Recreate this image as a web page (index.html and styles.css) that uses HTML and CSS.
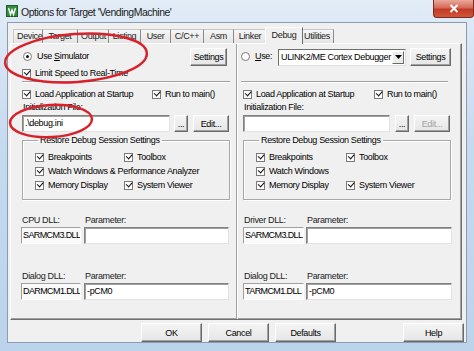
FILE: index.html
```html
<!DOCTYPE html>
<html lang="en">
<head>
  <meta charset="UTF-8" />
  <title>Options for Target 'VendingMachine'</title>
  <link rel="stylesheet" href="styles.css">
</head>
<body>
  <div class="window">
    <div class="titlebar">
      <span class="app-icon">
        <svg width="12" height="12" viewBox="0 0 12 12">
          <rect x="0" y="0" width="12" height="12" fill="#2f8f3c"/>
          <rect x="0.5" y="0.5" width="11" height="11" fill="none" stroke="#1c5e25"/>
          <path d="M2.5 3 L4.5 9.5 L6 5 L7.5 9.5 L9.5 3" fill="none" stroke="#fff" stroke-width="1.4"/>
        </svg>
      </span>
      <span class="title">Options for Target 'VendingMachine'</span>
      <span class="close-btn">
        <svg width="10" height="9" viewBox="0 0 10 9">
          <path d="M1.5 1 L8.5 8 M8.5 1 L1.5 8" stroke="#fff" stroke-width="2"/>
        </svg>
      </span>
    </div>

    <div class="client">
      <div class="tabs">
        <span class="tab first">Device</span>
        <span class="tab">Target</span>
        <span class="tab">Output</span>
        <span class="tab">Listing</span>
        <span class="tab">User</span>
        <span class="tab">C/C++</span>
        <span class="tab">Asm</span>
        <span class="tab">Linker</span>
        <span class="tab active">Debug</span>
        <span class="tab">Utilities</span>
      </div>

      <div class="panel">
        <!-- simulator side -->
        <div class="col col-left">
          <div class="row row-use">
            <label class="radio on"><span class="circle"></span><span>Use <u>S</u>imulator</span></label>
            <button class="btn btn-settings">Settings</button>
          </div>
          <div class="row row-limit">
            <label class="check on"><span class="box"></span>Limit Speed to Real-Time</label>
          </div>
          <div class="sep"></div>
          <div class="row row-load">
            <label class="check on load-app"><span class="box"></span>Load Application at Startup</label>
            <label class="check on"><span class="box"></span>Run to main()</label>
          </div>
          <div class="label-row">Initialization File:</div>
          <div class="row row-file">
            <div class="field file-field">.\debug.ini</div>
            <button class="btn btn-dots">...</button>
            <button class="btn btn-edit">Edit...</button>
          </div>
          <fieldset class="group">
            <legend>Restore Debug Session Settings</legend>
            <div class="group-row">
              <label class="check on g1"><span class="box"></span>Breakpoints</label>
              <label class="check on"><span class="box"></span>Toolbox</label>
            </div>
            <div class="group-row">
              <label class="check on"><span class="box"></span>Watch Windows &amp; Performance Analyzer</label>
            </div>
            <div class="group-row">
              <label class="check on g1"><span class="box"></span>Memory Display</label>
              <label class="check on"><span class="box"></span>System Viewer</label>
            </div>
          </fieldset>
          <div class="dll dll-first">
            <span class="dll-label">CPU DLL:</span>
            <span class="dll-label">Parameter:</span>
            <div class="field dll-name">SARMCM3.DLL</div>
            <div class="field param"></div>
          </div>
          <div class="dll dll-second">
            <span class="dll-label">Dialog DLL:</span>
            <span class="dll-label">Parameter:</span>
            <div class="field dll-name">DARMCM1.DLL</div>
            <div class="field param">-pCM0</div>
          </div>
        </div>

        <!-- target side -->
        <div class="col col-right">
          <div class="row row-use">
            <label class="radio"><span class="circle"></span><span><u>U</u>se:</span></label>
            <div class="select">
              <span class="select-text">ULINK2/ME Cortex Debugger</span>
              <span class="select-arrow">
                <svg width="7" height="4" viewBox="0 0 7 4"><path d="M0 0 H7 L3.5 4 Z" fill="#000"/></svg>
              </span>
            </div>
            <button class="btn btn-settings">Settings</button>
          </div>
          <div class="row row-limit"></div>
          <div class="sep"></div>
          <div class="row row-load">
            <label class="check on load-app-r"><span class="box"></span>Load Application at Startup</label>
            <label class="check on"><span class="box"></span>Run to main()</label>
          </div>
          <div class="label-row">Initialization File:</div>
          <div class="row row-file">
            <div class="field file-field"></div>
            <button class="btn btn-dots">...</button>
            <button class="btn btn-edit disabled">Edit...</button>
          </div>
          <fieldset class="group">
            <legend>Restore Debug Session Settings</legend>
            <div class="group-row">
              <label class="check on g1r"><span class="box"></span>Breakpoints</label>
              <label class="check on"><span class="box"></span>Toolbox</label>
            </div>
            <div class="group-row">
              <label class="check on"><span class="box"></span>Watch Windows</label>
            </div>
            <div class="group-row">
              <label class="check on g1r"><span class="box"></span>Memory Display</label>
              <label class="check on"><span class="box"></span>System Viewer</label>
            </div>
          </fieldset>
          <div class="dll dll-first">
            <span class="dll-label">Driver DLL:</span>
            <span class="dll-label">Parameter:</span>
            <div class="field dll-name">SARMCM3.DLL</div>
            <div class="field param"></div>
          </div>
          <div class="dll dll-second">
            <span class="dll-label">Dialog DLL:</span>
            <span class="dll-label">Parameter:</span>
            <div class="field dll-name">TARMCM1.DLL</div>
            <div class="field param">-pCM0</div>
          </div>
        </div>
      </div>

      <div class="buttons">
        <button class="btn btn-main">OK</button>
        <button class="btn btn-main">Cancel</button>
        <button class="btn btn-main">Defaults</button>
        <button class="btn btn-main btn-help">Help</button>
      </div>
    </div>

    <!-- red marker annotations drawn over the dialog -->
    <svg class="marks" width="474" height="351" viewBox="0 0 474 351">
      <ellipse cx="76" cy="58" rx="71" ry="24" transform="rotate(-4 76 58)" fill="none" stroke="#d8222b" stroke-width="2.5"/>
      <ellipse cx="51" cy="121" rx="41" ry="16" transform="rotate(-3 51 121)" fill="none" stroke="#d8222b" stroke-width="2.5"/>
    </svg>
  </div>
</body>
</html>
```

FILE: styles.css
```css
* {
  box-sizing: border-box;
}
body {
  margin: 0;
  background: #fff;
  font-family: "Liberation Sans", Arial, sans-serif;
  font-size: 9px;
  letter-spacing: -0.35px;
  color: #000;
}
.window {
  position: relative;
  width: 474px;
  height: 351px;
  background: linear-gradient(#e2ecf7, #c6daef 40%, #bcd3ec);
  padding: 0 7px 8px 7px;
  overflow: hidden;
}
.titlebar {
  height: 22px;
  display: flex;
  align-items: center;
  margin-left: -1px;
}
.app-icon {
  width: 12px;
  height: 12px;
  display: flex;
}
.title {
  margin-left: 3px;
  margin-top: 1px;
  font-size: 10.5px;
  letter-spacing: -0.5px;
  color: #1b1b1b;
}
.close-btn {
  margin-left: auto;
  margin-right: -7px;
  align-self: flex-start;
  width: 41px;
  height: 18px;
  display: flex;
  align-items: center;
  justify-content: center;
  background: linear-gradient(#e9a99c, #d56a58 45%, #c23b25 55%, #d0563c);
  border: 1px solid #7a2a20;
  border-top: none;
  border-radius: 0 0 4px 4px;
}
.client {
  height: 321px;
  background: #f0f0f0;
  border: 1px solid #8c9cb0;
  padding: 5px 4px 0 2px;
  display: flex;
  flex-direction: column;
}
.tabs {
  height: 15px;
  display: flex;
  padding-left: 3px;
  align-items: flex-end;
}
.tab {
  height: 14px;
  padding: 0 3px;
  line-height: 13px;
  text-align: center;
  border-top: 1px solid #c8c8c8;
  border-right: 1px solid #8a8a8a;
  background: linear-gradient(#f6f6f6, #e4e4e4);
  color: #1c1c1c;
}
.tab:nth-child(1) { width: 30px; }
.tab:nth-child(2) { width: 35px; }
.tab:nth-child(3) { width: 31px; }
.tab:nth-child(4) { width: 32px; }
.tab:nth-child(5) { width: 30px; }
.tab:nth-child(6) { width: 33px; }
.tab:nth-child(7) { width: 30px; }
.tab:nth-child(8) { width: 33px; }
.tab:nth-child(10) { width: 33px; }
.tab.first {
  border-left: 1px solid #c8c8c8;
}
.tab.active {
  width: 38px;
  height: 17px;
  margin-bottom: -1px;
  margin-left: -2px;
  margin-right: -2px;
  line-height: 14px;
  background: #f0f0f0;
  border-top: 1px solid #fff;
  border-left: 1px solid #fff;
  border-right: 1px solid #6f6f6f;
  position: relative;
  z-index: 1;
}
.panel {
  height: 277px;
  border: 1px solid;
  border-color: #fff #6f6f6f #6f6f6f #fff;
  box-shadow: inset -1px -1px 0 #a0a0a0;
  display: grid;
  grid-template-columns: 226px 1fr;
}
.col {
  display: flex;
  flex-direction: column;
}
.col-left {
  padding: 0 6px 0 11px;
  border-right: 1px solid #a0a0a0;
}
.col-right {
  padding: 0 12px 0 5px;
  border-left: 1px solid #fff;
}
.row {
  display: flex;
  align-items: center;
}
.row-use {
  margin-top: 3px;
  height: 18px;
}
.row-limit {
  height: 14px;
  margin-top: 1px;
}
.sep {
  margin-top: 1px;
  height: 2px;
  border-top: 1px solid #a0a0a0;
  border-bottom: 1px solid #fff;
}
.col-right .sep {
  margin-left: -2px;
  margin-right: 4px;
}
.row-load {
  margin-top: 4px;
  height: 14px;
}
.label-row {
  height: 12px;
  line-height: 12px;
  margin-top: 0;
  padding-left: 1px;
}
.row-file {
  margin-top: 2px;
  height: 17px;
}
.check, .radio {
  display: flex;
  align-items: center;
  white-space: nowrap;
}
.box {
  width: 9px;
  height: 9px;
  margin-right: 4px;
  border: 1px solid #7a7a7a;
  background: #fff;
  position: relative;
}
.check.on .box::after {
  content: "";
  position: absolute;
  left: 1px;
  top: 0.5px;
  width: 5px;
  height: 2.5px;
  border-left: 1.6px solid #111;
  border-bottom: 1.6px solid #111;
  transform: rotate(-48deg);
}
.circle {
  width: 9px;
  height: 9px;
  margin-right: 5px;
  border-radius: 50%;
  border: 1px solid #7a7a7a;
  background: #fff;
  position: relative;
}
.radio.on .circle::after {
  content: "";
  position: absolute;
  left: 2px;
  top: 2px;
  width: 3px;
  height: 3px;
  border-radius: 50%;
  background: #111;
}
.col-left .radio {
  margin-left: 1px;
}
.col-right .radio {
  margin-left: -2px;
  width: 37px;
}
.load-app {
  width: 130px;
}
.load-app-r {
  width: 131px;
}
.btn {
  font: inherit;
  letter-spacing: inherit;
  color: #000;
  padding: 0;
  background: linear-gradient(#f4f4f4, #e6e6e6);
  border: 1px solid;
  border-color: #fff #696969 #696969 #fff;
  box-shadow: inset -1px -1px 0 #a0a0a0;
}
.btn-settings {
  margin-left: auto;
  margin-right: 3px;
  width: 37px;
  height: 18px;
  margin-top: 1px;
}
.col-right .btn-settings {
  margin-left: 4px;
  margin-right: 0;
  width: 41px;
}
.select {
  width: 128px;
  height: 17px;
  margin-top: 2px;
  background: #fff;
  border: 1px solid;
  border-color: #6f6f6f #e0e0e0 #e0e0e0 #6f6f6f;
  display: flex;
  align-items: center;
  padding-left: 2px;
  white-space: nowrap;
}
.select-text {
  flex: 1;
  overflow: hidden;
}
.select-arrow {
  width: 12px;
  height: 13px;
  margin-right: 1px;
  display: flex;
  align-items: center;
  justify-content: center;
  background: #ececec;
  border: 1px solid;
  border-color: #fff #696969 #696969 #fff;
}
.field {
  height: 17px;
  background: #fff;
  border: 1px solid;
  border-color: #828282 #e3e3e3 #e3e3e3 #828282;
  box-shadow: inset 1px 1px 0 #a0a0a0;
  padding-left: 2px;
  line-height: 15px;
  white-space: nowrap;
  overflow: hidden;
}
.file-field {
  width: 148px;
}
.btn-dots {
  margin-left: 4px;
  width: 14px;
  height: 17px;
  line-height: 10px;
}
.btn-edit {
  margin-left: 5px;
  width: 36px;
  height: 17px;
}
.col-right .file-field {
  width: 147px;
}
.col-right .btn-dots {
  margin-left: 5px;
  width: 14px;
}
.btn-edit.disabled {
  color: #a0a0a0;
}
.group {
  margin: 3px 0 0 0;
  padding: 5px 0 0 12px;
  height: 65px;
  border: 1px solid #a8a8a8;
  box-shadow: 1px 1px 0 #fff, inset 1px 1px 0 #fff;
  width: 208px;
}
.group legend {
  padding: 0 2px;
  margin-left: 3px;
  line-height: 10px;
}
.group-row {
  height: 14px;
  display: flex;
  align-items: center;
}
.g1 {
  width: 89px;
}
.g1r {
  width: 90px;
}
.dll {
  display: grid;
  grid-template-columns: 60px 145px;
  column-gap: 3px;
  margin-left: -1px;
}
.dll-first {
  margin-top: 14px;
}
.dll-second {
  margin-top: 26px;
}
.col-right .dll {
  grid-template-columns: 61px 146px;
  margin-left: 0;
  column-gap: 2px;
}
.dll-label {
  height: 13px;
  line-height: 12px;
  padding-left: 1px;
  color: #222;
}
.dll .field {
  height: 17px;
  padding-left: 2px;
}
.dll .dll-name {
  padding-left: 1px;
  letter-spacing: -0.6px;
  background: #fafafa;
  border-color: #a0a0a0 #fff #fff #a0a0a0;
  box-shadow: none;
}
.buttons {
  display: flex;
  margin-top: 3px;
  padding-left: 131px;
  gap: 6px;
}
.btn-main {
  width: 61px;
  height: 19px;
}
.btn-help {
  margin-left: auto;
  margin-right: -2px;
}
.marks {
  position: absolute;
  left: 0;
  top: 0;
  pointer-events: none;
}
```
